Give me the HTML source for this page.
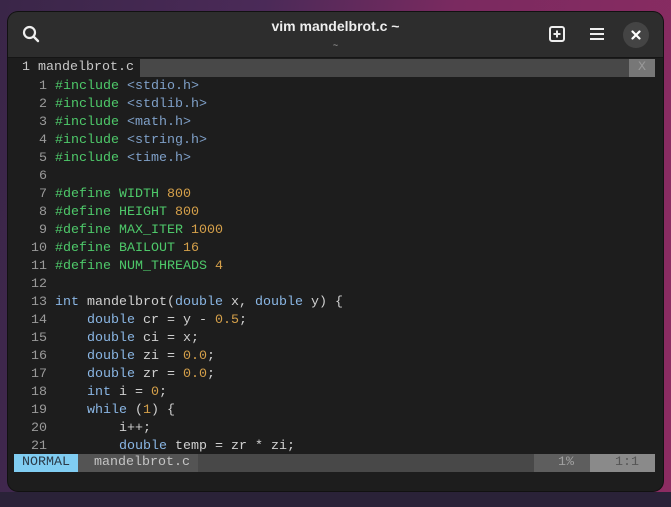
<!DOCTYPE html>
<html><head><meta charset="utf-8"><style>
*{margin:0;padding:0;box-sizing:border-box}
body{width:671px;height:507px;overflow:hidden;background:linear-gradient(100deg,#3a2648 0%,#4b2a58 35%,#7a2a60 60%,#8c2c62 100%);position:relative;font-family:"Liberation Sans",sans-serif}
.bg2{position:absolute;left:0;top:492px;width:671px;height:15px;background:#2a2238}
.win{position:absolute;left:8px;top:12px;width:655px;height:479px;background:#1d1d1d;border-radius:10px;overflow:hidden;box-shadow:0 0 0 1px #111}
.hdr{position:absolute;left:0;top:0;width:655px;height:46px;background:#2d2d2d;border-bottom:1px solid #151515}
.title{position:absolute;left:0;width:655px;top:6px;text-align:center;color:#eee;font-weight:bold;font-size:14px}
.sub{position:absolute;left:0;width:655px;top:28px;text-align:center;color:#aaa;font-size:9px}
pre{font-family:"Liberation Mono",monospace;font-size:13.33px;line-height:18px;color:#d0d0d0}
.code{position:absolute;left:15px;top:66px}
.ln{color:#9a9a9a}.g{color:#4ec96a}.s{color:#7fa0c8}.n{color:#d5a04a}.t{color:#8ab6e4}
.tab{position:absolute;left:6px;top:47px;height:18px;width:641px;background:#484848}
.bar{position:absolute;left:6px;top:442px;height:18px;width:641px;background:#484848}
</style></head><body>
<div class="bg2"></div>
<div class="win">
<div class="hdr">
<div class="title">vim mandelbrot.c ~</div>
<div class="sub">~</div>
<svg style="position:absolute;left:14px;top:13px" width="18" height="18" viewBox="0 0 18 18"><circle cx="7.5" cy="7.5" r="5.5" fill="none" stroke="#eee" stroke-width="2.2"/><path d="M11.5 11.5L16 16" stroke="#eee" stroke-width="2.4" stroke-linecap="round"/></svg>
<svg style="position:absolute;left:540px;top:13px" width="18" height="18" viewBox="0 0 18 18"><rect x="2" y="2" width="14" height="14" rx="2" fill="none" stroke="#eee" stroke-width="2"/><path d="M9 5.5v7M5.5 9h7" stroke="#eee" stroke-width="2"/></svg>
<svg style="position:absolute;left:580px;top:13px" width="18" height="18" viewBox="0 0 18 18"><path d="M2 4h14M2 9h14M2 14h14" stroke="#eee" stroke-width="2"/></svg>
<div style="position:absolute;left:615px;top:10px;width:26px;height:26px;border-radius:13px;background:#444"></div>
<svg style="position:absolute;left:622px;top:17px" width="12" height="12" viewBox="0 0 12 12"><path d="M2.5 2.5l7 7M9.5 2.5l-7 7" stroke="#fff" stroke-width="2.2" stroke-linecap="round"/></svg>
</div>
<div class="tab"><pre style="position:absolute;left:0;top:0;background:#1d1d1d;color:#c8c8c8;width:126px;padding-left:0"> 1 mandelbrot.c </pre><pre style="position:absolute;right:0;top:0;width:26px;background:#777;color:#999;text-align:center">X</pre></div>
<pre class="code"><span class="ln">  1 </span><span class="g">#include</span> <span class="s">&lt;stdio.h&gt;</span>
<span class="ln">  2 </span><span class="g">#include</span> <span class="s">&lt;stdlib.h&gt;</span>
<span class="ln">  3 </span><span class="g">#include</span> <span class="s">&lt;math.h&gt;</span>
<span class="ln">  4 </span><span class="g">#include</span> <span class="s">&lt;string.h&gt;</span>
<span class="ln">  5 </span><span class="g">#include</span> <span class="s">&lt;time.h&gt;</span>
<span class="ln">  6 </span>
<span class="ln">  7 </span><span class="g">#define WIDTH</span> <span class="n">800</span>
<span class="ln">  8 </span><span class="g">#define HEIGHT</span> <span class="n">800</span>
<span class="ln">  9 </span><span class="g">#define MAX_ITER</span> <span class="n">1000</span>
<span class="ln"> 10 </span><span class="g">#define BAILOUT</span> <span class="n">16</span>
<span class="ln"> 11 </span><span class="g">#define NUM_THREADS</span> <span class="n">4</span>
<span class="ln"> 12 </span>
<span class="ln"> 13 </span><span class="t">int</span> mandelbrot(<span class="t">double</span> x, <span class="t">double</span> y) {
<span class="ln"> 14 </span>    <span class="t">double</span> cr = y - <span class="n">0.5</span>;
<span class="ln"> 15 </span>    <span class="t">double</span> ci = x;
<span class="ln"> 16 </span>    <span class="t">double</span> zi = <span class="n">0.0</span>;
<span class="ln"> 17 </span>    <span class="t">double</span> zr = <span class="n">0.0</span>;
<span class="ln"> 18 </span>    <span class="t">int</span> i = <span class="n">0</span>;
<span class="ln"> 19 </span>    <span class="t">while</span> (<span class="n">1</span>) {
<span class="ln"> 20 </span>        i++;
<span class="ln"> 21 </span>        <span class="t">double</span> temp = zr * zi;</pre>
<div class="bar">
<pre style="position:absolute;left:0;top:0;width:64px;background:#80cdf2;color:#2a3a48"> NORMAL </pre>
<pre style="position:absolute;left:64px;top:0;width:120px;background:#545454;color:#c4c4c4">  mandelbrot.c </pre>
<pre style="position:absolute;left:520px;top:0;width:56px;background:#5e5e5e;color:#a0a0a0;text-align:right;padding-right:16px">1%</pre>
<pre style="position:absolute;left:576px;top:0;width:65px;background:#8a8a8a;color:#555;text-align:right;padding-right:16px">1:1</pre>
</div>
</div>
</body></html>
